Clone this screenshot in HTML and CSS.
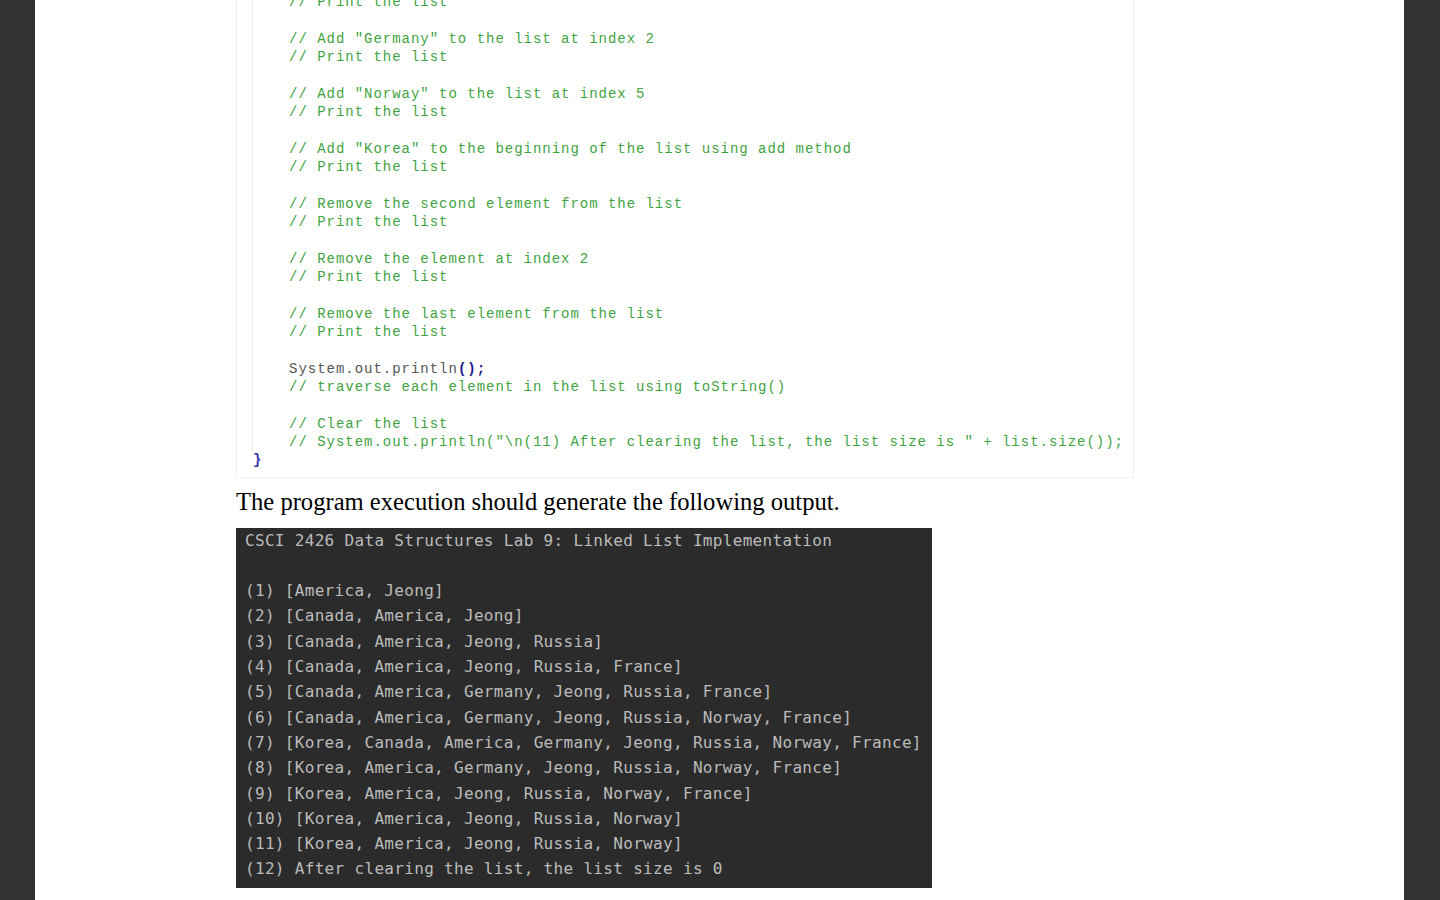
FILE: index.html
```html
<!DOCTYPE html>
<html lang="en">
<head>
<meta charset="utf-8">
<title>Lab 9: Linked List Implementation</title>
<link rel="stylesheet" href="styles.css">
</head>
<body>
<div class="frame">
  <div class="side side-left"></div>
  <main class="page">
    <div class="code-box">
      <div class="code">
        <div class="body">
<div class="ln c">// Print the list</div>
<div class="ln"></div>
<div class="ln c">// Add "Germany" to the list at index 2</div>
<div class="ln c">// Print the list</div>
<div class="ln"></div>
<div class="ln c">// Add "Norway" to the list at index 5</div>
<div class="ln c">// Print the list</div>
<div class="ln"></div>
<div class="ln c">// Add "Korea" to the beginning of the list using add method</div>
<div class="ln c">// Print the list</div>
<div class="ln"></div>
<div class="ln c">// Remove the second element from the list</div>
<div class="ln c">// Print the list</div>
<div class="ln"></div>
<div class="ln c">// Remove the element at index 2</div>
<div class="ln c">// Print the list</div>
<div class="ln"></div>
<div class="ln c">// Remove the last element from the list</div>
<div class="ln c">// Print the list</div>
<div class="ln"></div>
<div class="ln"><span class="plain">System.out.println</span><span class="op">();</span></div>
<div class="ln c">// traverse each element in the list using toString()</div>
<div class="ln"></div>
<div class="ln c">// Clear the list</div>
<div class="ln c">// System.out.println("\n(11) After clearing the list, the list size is " + list.size());</div>
        </div>
        <div class="ln brace">}</div>
      </div>
    </div>
    <p class="lead">The program execution should generate the following output.</p>
    <pre class="term">CSCI 2426 Data Structures Lab 9: Linked List Implementation

(1) [America, Jeong]
(2) [Canada, America, Jeong]
(3) [Canada, America, Jeong, Russia]
(4) [Canada, America, Jeong, Russia, France]
(5) [Canada, America, Germany, Jeong, Russia, France]
(6) [Canada, America, Germany, Jeong, Russia, Norway, France]
(7) [Korea, Canada, America, Germany, Jeong, Russia, Norway, France]
(8) [Korea, America, Germany, Jeong, Russia, Norway, France]
(9) [Korea, America, Jeong, Russia, Norway, France]
(10) [Korea, America, Jeong, Russia, Norway]
(11) [Korea, America, Jeong, Russia, Norway]
(12) After clearing the list, the list size is 0</pre>
  </main>
  <div class="side side-right"></div>
</div>
</body>
</html>
```
FILE: styles.css
```css
html, body {
  margin: 0;
  padding: 0;
  height: 100%;
  overflow: hidden;
  background: #ffffff;
}

.frame {
  display: flex;
  height: 900px;
  width: 1440px;
}

.side {
  background: #333333;
  flex: none;
}
.side-left { width: 35px; }
.side-right { width: 36px; }

.page {
  flex: 1;
  background: #ffffff;
  padding-left: 201px;
  overflow: hidden;
}

.code-box {
  width: 881px;
  margin-top: -10px;
  border: 1px solid #f0f0f0;
  border-top: none;
  padding: 3px 0 7px 15px;
  box-sizing: content-box;
}

.code {
  font-family: "Liberation Mono", "Courier New", monospace;
  font-size: 14px;
  letter-spacing: 0.98px;
  line-height: 18.33px;
  color: #555555;
}

.body {
  border-left: 1px solid #f0f0f0;
  padding-left: 36px;
}

.ln {
  height: 18.33px;
  white-space: pre;
}

.c { color: #3fa33f; }
.plain { color: #555555; }
.op { color: #1a1a8c; font-weight: bold; }

.brace {
  padding-left: 1px;
  color: #3333aa;
  font-weight: bold;
}

.lead {
  margin: 9px 0 11px 0;
  font-family: "Liberation Serif", "Times New Roman", serif;
  font-size: 24.6px;
  line-height: 30px;
  color: #000000;
}

.term {
  margin: 0;
  width: 687px;
  height: 353px;
  padding: 0 0 7px 9px;
  background: #2b2b2b;
  color: #bbbbbb;
  font-family: "DejaVu Sans Mono", monospace;
  font-size: 16px;
  letter-spacing: 0.32px;
  line-height: 25.3px;
  overflow: hidden;
}
```
